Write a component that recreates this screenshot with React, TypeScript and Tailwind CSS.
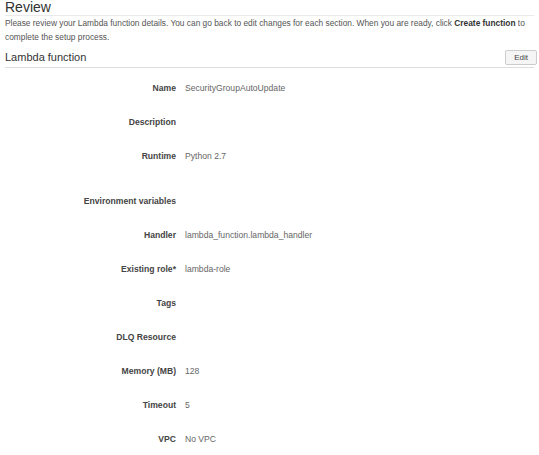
const rows: { label: string; value?: string; gap?: string }[] = [
  { label: 'Name', value: 'SecurityGroupAutoUpdate' },
  { label: 'Description' },
  { label: 'Runtime', value: 'Python 2.7' },
  { label: 'Environment variables', gap: 'mt-[11px]' },
  { label: 'Handler', value: 'lambda_function.lambda_handler' },
  { label: 'Existing role*', value: 'lambda-role' },
  { label: 'Tags' },
  { label: 'DLQ Resource' },
  { label: 'Memory (MB)', value: '128' },
  { label: 'Timeout', value: '5' },
  { label: 'VPC', value: 'No VPC' },
];

export default function App() {
  return (
    <div className="w-[539px] h-[455px] overflow-hidden bg-white px-[5px] font-['Liberation_Sans',Arial,sans-serif] text-[#444]">
      <h1 className="border-b border-[#eaeaea] pb-px text-[14px] leading-[14px] text-[#333]">Review</h1>
      <p className="text-[8.35px] leading-[14px] text-[#555]">
        <span>
          Please review your Lambda function details. You can go back to edit changes for each section. When you are ready, click{' '}
          <b className="text-[#333]">Create function</b> to
        </span>
        <br />
        <span>complete the setup process.</span>
      </p>
      <div className="mt-[6px] flex items-center justify-between border-b border-[#ddd] pb-[2px]">
        <h2 className="text-[11px] leading-[13px] text-[#333]">Lambda function</h2>
        <button className="mr-[-3px] rounded-[2px] border border-[#ccc] bg-[#f5f5f5] px-[8px] text-[8px] leading-[13px] text-[#444]">
          Edit
        </button>
      </div>
      <div className="pt-[13px]">
        {rows.map((r) => (
          <div key={r.label} className={`flex h-[34px] items-start text-[8.6px] leading-[14px] ${r.gap ?? ''}`}>
            <div className="w-[171px] shrink-0 text-right font-bold text-[#444]">{r.label}</div>
            <div className="pl-[9px] text-[#666]">{r.value}</div>
          </div>
        ))}
      </div>
    </div>
  );
}
